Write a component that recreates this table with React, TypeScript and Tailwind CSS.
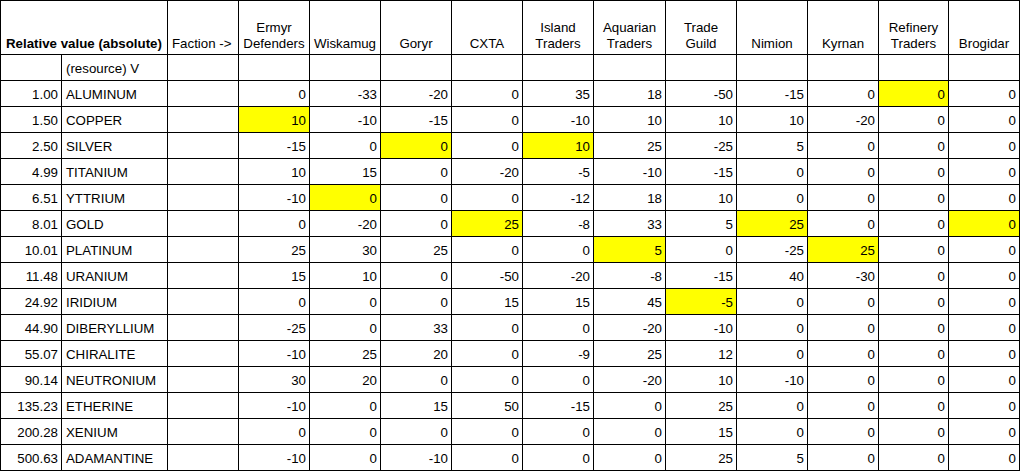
import { Fragment } from 'react';

const factions = [
  'Ermyr Defenders',
  'Wiskamug',
  'Goryr',
  'CXTA',
  'Island Traders',
  'Aquarian Traders',
  'Trade Guild',
  'Nimion',
  'Kyrnan',
  'Refinery Traders',
  'Brogidar',
];

// hl = index of the highlighted faction columns
const resources = [
  { value: '1.00', name: 'ALUMINUM', mods: [0, -33, -20, 0, 35, 18, -50, -15, 0, 0, 0], hl: [9] },
  { value: '1.50', name: 'COPPER', mods: [10, -10, -15, 0, -10, 10, 10, 10, -20, 0, 0], hl: [0] },
  { value: '2.50', name: 'SILVER', mods: [-15, 0, 0, 0, 10, 25, -25, 5, 0, 0, 0], hl: [2, 4] },
  { value: '4.99', name: 'TITANIUM', mods: [10, 15, 0, -20, -5, -10, -15, 0, 0, 0, 0], hl: [] },
  { value: '6.51', name: 'YTTRIUM', mods: [-10, 0, 0, 0, -12, 18, 10, 0, 0, 0, 0], hl: [1] },
  { value: '8.01', name: 'GOLD', mods: [0, -20, 0, 25, -8, 33, 5, 25, 0, 0, 0], hl: [3, 7, 10] },
  { value: '10.01', name: 'PLATINUM', mods: [25, 30, 25, 0, 0, 5, 0, -25, 25, 0, 0], hl: [5, 8] },
  { value: '11.48', name: 'URANIUM', mods: [15, 10, 0, -50, -20, -8, -15, 40, -30, 0, 0], hl: [] },
  { value: '24.92', name: 'IRIDIUM', mods: [0, 0, 0, 15, 15, 45, -5, 0, 0, 0, 0], hl: [6] },
  { value: '44.90', name: 'DIBERYLLIUM', mods: [-25, 0, 33, 0, 0, -20, -10, 0, 0, 0, 0], hl: [] },
  { value: '55.07', name: 'CHIRALITE', mods: [-10, 25, 20, 0, -9, 25, 12, 0, 0, 0, 0], hl: [] },
  { value: '90.14', name: 'NEUTRONIUM', mods: [30, 20, 0, 0, 0, -20, 10, -10, 0, 0, 0], hl: [] },
  { value: '135.23', name: 'ETHERINE', mods: [-10, 0, 15, 50, -15, 0, 25, 0, 0, 0, 0], hl: [] },
  { value: '200.28', name: 'XENIUM', mods: [0, 0, 0, 0, 0, 0, 15, 0, 0, 0, 0], hl: [] },
  { value: '500.63', name: 'ADAMANTINE', mods: [-10, 0, -10, 0, 0, 0, 25, 5, 0, 0, 0], hl: [] },
];

export default function App() {
  return (
    <div
      className="w-[1020px] h-[471px] bg-white text-black text-[13.3px] leading-[16px]"
      style={{ fontFamily: '"Liberation Sans", Arial, sans-serif' }}
    >
      <div className="grid grid-cols-[60px_105px_70px_70px_70px_70px_70px_70px_71px_70px_70px_70px_69px_70px] grid-rows-[53px] auto-rows-[25px] gap-px p-px bg-black w-[1020px]">
        {/* header */}
        <div className="col-span-2 bg-white flex items-end pb-[2px] pl-[5px] font-bold">
          Relative value (absolute)
        </div>
        <div className="bg-white flex items-end pb-[2px] pl-[4px]">Faction -&gt;</div>
        {factions.map((f) => (
          <div key={f} className="bg-white flex items-end justify-center text-center pb-[2px] px-[2px]">
            {f}
          </div>
        ))}

        {/* resource label row */}
        <div className="bg-white" />
        <div className="bg-white flex items-center pt-[2px] pl-[4px]">(resource) V</div>
        <div className="bg-white" />
        {factions.map((f) => (
          <div key={f} className="bg-white" />
        ))}

        {resources.map((r) => (
          <Fragment key={r.name}>
            <div className="bg-white flex items-center justify-end pt-[2px] pr-[3px]">{r.value}</div>
            <div className="bg-white flex items-center pt-[2px] pl-[4px]">{r.name}</div>
            <div className="bg-white" />
            {r.mods.map((m, i) => (
              <div
                key={i}
                className={`${r.hl.includes(i) ? 'bg-[#ffff00]' : 'bg-white'} flex items-center justify-end pt-[2px] pr-[3px]`}
              >
                {m}
              </div>
            ))}
          </Fragment>
        ))}
      </div>
    </div>
  );
}
